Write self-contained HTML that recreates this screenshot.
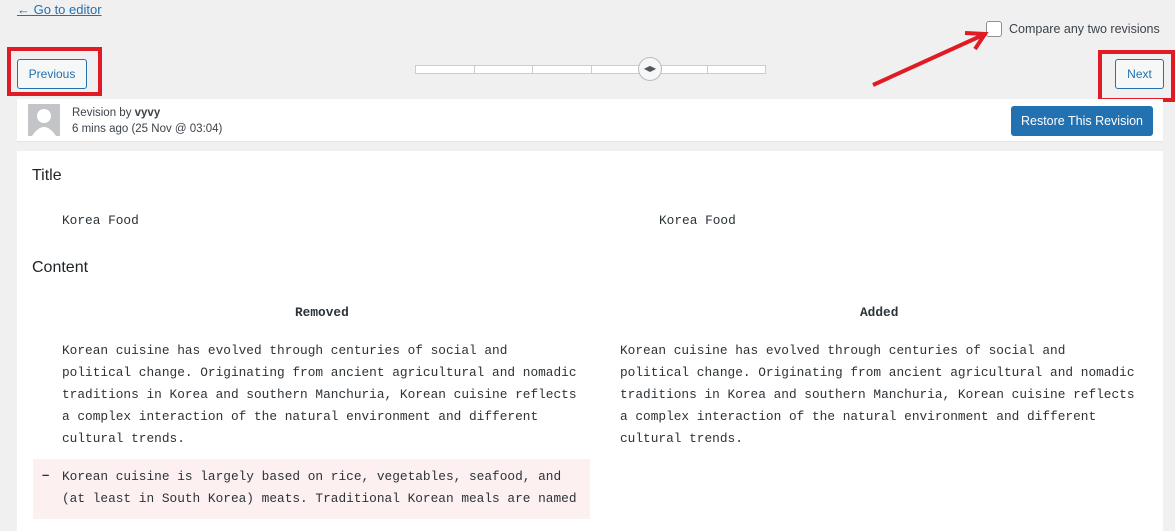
<!DOCTYPE html>
<html><head><style>
body{margin:0;background:#f0f0f1;width:1175px;height:515px;overflow:hidden;position:relative;font-family:"Liberation Sans",sans-serif;color:#3c434a}
.a{position:absolute}
.mono{font-family:"Liberation Mono",monospace;font-size:12.8px;color:#2c3338}
.btn{position:absolute;border:1px solid #2271b1;border-radius:3px;background:#f6f7f7;color:#2271b1;font-size:12px;text-align:center;box-sizing:border-box}
.red{position:absolute;border:4px solid #e01b24;box-sizing:border-box}
.p{line-height:22px;white-space:pre}
</style></head><body>
<a class="a" style="left:17px;top:2px;font-size:13px;color:#2271b1;text-decoration:underline">← Go to editor</a>
<div class="a" style="left:986px;top:21px;width:14px;height:14px;border:1px solid #8c8f94;border-radius:3px;background:#fff"></div>
<div class="a" style="left:1009px;top:22px;font-size:12.5px">Compare any two revisions</div>
<svg class="a" style="left:868px;top:25px" width="125" height="65"><path d="M5 60 L115 10" stroke="#e01b24" stroke-width="4" fill="none"/><path d="M97 8 L117 9 L107 24" stroke="#e01b24" stroke-width="4" fill="none"/></svg>
<div class="red" style="left:7px;top:47px;width:95px;height:49px"></div>
<div class="btn" style="left:17px;top:59px;width:70px;height:30px;line-height:29px">Previous</div>
<div class="red" style="left:1098px;top:50px;width:77px;height:52px"></div>
<div class="btn" style="left:1115px;top:59px;width:49px;height:30px;line-height:29px">Next</div>
<div class="a" style="left:415px;top:65px;width:351px;height:9px;border:1px solid #ccc;background:#fff;box-sizing:border-box"></div>
<div class="a" style="left:474px;top:65px;width:1px;height:9px;background:#ccc"></div>
<div class="a" style="left:532px;top:65px;width:1px;height:9px;background:#ccc"></div>
<div class="a" style="left:591px;top:65px;width:1px;height:9px;background:#ccc"></div>
<div class="a" style="left:707px;top:65px;width:1px;height:9px;background:#ccc"></div>
<div class="a" style="left:638px;top:57px;width:24px;height:24px;border:1px solid #bbb;border-radius:50%;background:#f6f7f7;box-sizing:border-box;font-size:8px;line-height:22px;text-align:center;color:#50575e">◀▶</div>
<div class="a" style="left:17px;top:99px;width:1146px;height:42px;background:#fff;box-shadow:0 1px 1px rgba(0,0,0,.05)"></div>
<svg class="a" style="left:28px;top:104px" width="32" height="32"><rect width="32" height="32" fill="#c3c4c7"/><circle cx="16" cy="12" r="7" fill="#fff"/><path d="M4 32 Q16 14 28 32Z" fill="#fff"/></svg>
<div class="a" style="left:72px;top:105px;font-size:11.5px;line-height:16px">Revision by <b>vyvy</b><br>6 mins ago (25 Nov @ 03:04)</div>
<div class="a" style="left:1011px;top:106px;width:142px;height:30px;background:#2271b1;border-radius:3px;color:#fff;font-size:12.5px;line-height:31px;text-align:center">Restore This Revision</div>
<div class="a" style="left:17px;top:151px;width:1146px;height:380px;background:#fff"></div>
<div class="a" style="left:32px;top:167px;font-size:16px;color:#1d2327">Title</div>
<div class="a mono" style="left:62px;top:213px">Korea Food</div>
<div class="a mono" style="left:659px;top:213px">Korea Food</div>
<div class="a" style="left:32px;top:259px;font-size:16px;color:#1d2327">Content</div>
<div class="a mono" style="left:295px;top:305px;font-weight:bold">Removed</div>
<div class="a mono" style="left:860px;top:305px;font-weight:bold">Added</div>
<div class="a mono p" style="left:62px;top:340px">Korean cuisine has evolved through centuries of social and
political change. Originating from ancient agricultural and nomadic
traditions in Korea and southern Manchuria, Korean cuisine reflects
a complex interaction of the natural environment and different
cultural trends.</div>
<div class="a mono p" style="left:620px;top:340px">Korean cuisine has evolved through centuries of social and
political change. Originating from ancient agricultural and nomadic
traditions in Korea and southern Manchuria, Korean cuisine reflects
a complex interaction of the natural environment and different
cultural trends.</div>
<div class="a" style="left:33px;top:459px;width:557px;height:60px;background:#fcf0f1"></div>
<div class="a" style="left:42px;top:467px;font-weight:bold;font-size:13px;color:#2c3338">–</div>
<div class="a mono p" style="left:62px;top:466px">Korean cuisine is largely based on rice, vegetables, seafood, and
(at least in South Korea) meats. Traditional Korean meals are named</div>
</body></html>
